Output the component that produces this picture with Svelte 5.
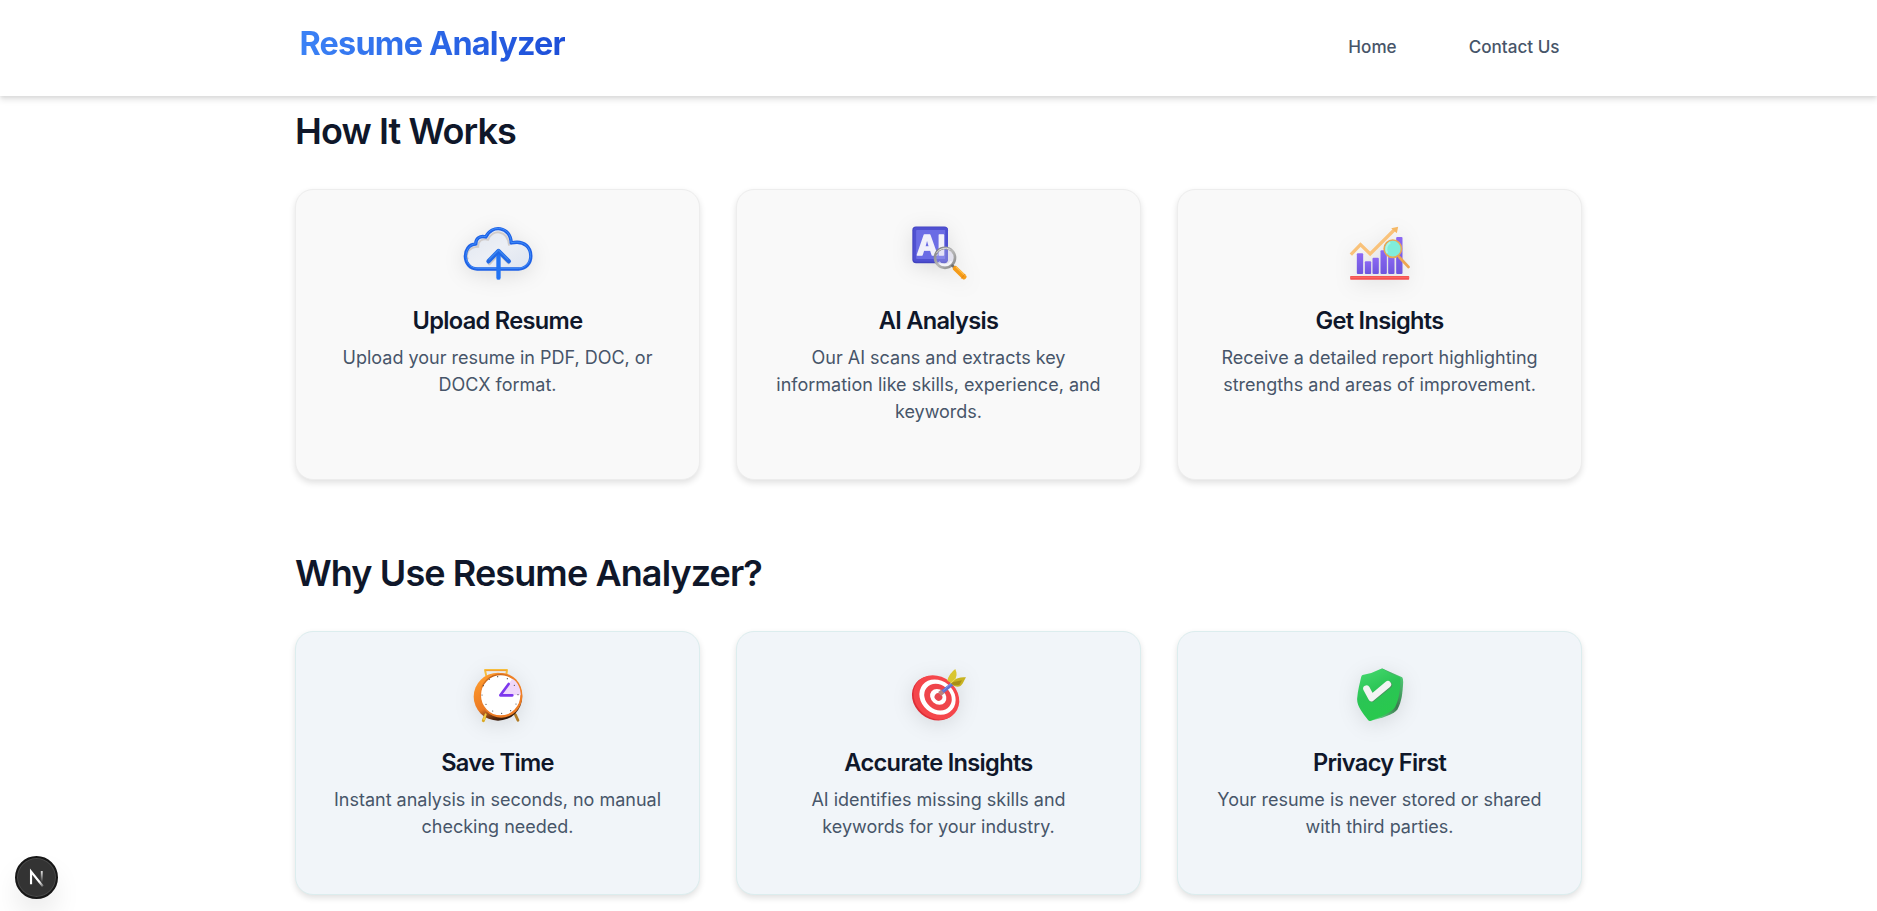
<script lang="ts">
    interface Feature {
        icon: string;
        viewBox: string;
        title: string;
        description: string;
    }

    interface Section {
        heading: string;
        tone: "plain" | "tinted";
        items: Feature[];
    }

    const sections: Section[] = [
        {
            heading: "How It Works",
            tone: "plain",
            items: [
                {
                    icon: "upload",
                    viewBox: "65.5 63 216 162",
                    title: "Upload Resume",
                    description: "Upload your resume in PDF, DOC, or DOCX format.",
                },
                {
                    icon: "ai",
                    viewBox: "38 62.5 216 162",
                    title: "AI Analysis",
                    description:
                        "Our AI scans and extracts key information like skills, experience, and keywords.",
                },
                {
                    icon: "chart",
                    viewBox: "41.5 63 216 162",
                    title: "Get Insights",
                    description:
                        "Receive a detailed report highlighting strengths and areas of improvement.",
                },
            ],
        },
        {
            heading: "Why Use Resume Analyzer?",
            tone: "tinted",
            items: [
                {
                    icon: "clock",
                    viewBox: "36 54 216 162",
                    title: "Save Time",
                    description:
                        "Instant analysis in seconds, no manual checking needed.",
                },
                {
                    icon: "target",
                    viewBox: "38 54 216 162",
                    title: "Accurate Insights",
                    description:
                        "AI identifies missing skills and keywords for your industry.",
                },
                {
                    icon: "shield",
                    viewBox: "41.5 54 216 162",
                    title: "Privacy First",
                    description:
                        "Your resume is never stored or shared with third parties.",
                },
            ],
        },
    ];

    // hour dots on the slightly turned clock face
    const dots = [
        [143, 80],
        [172, 86],
        [193, 106],
        [204, 134],
        [198, 162],
        [182, 182],
        [155, 190],
        [128, 183],
        [108, 163],
        [96, 135],
        [100, 107],
        [118, 88],
    ];

    const bars = [
        { x: 80, y: 145 },
        { x: 104, y: 169 },
        { x: 127, y: 158 },
        { x: 151, y: 136 },
        { x: 174, y: 150 },
        { x: 198, y: 96 },
    ];
</script>

<header class="navbar">
    <div class="navbar-inner">
        <a class="logo" href="#top">Resume Analyzer</a>
        <nav>
            <a href="#home">Home</a>
            <a href="#contact">Contact Us</a>
        </nav>
    </div>
</header>

<main>
    {#each sections as section}
        <section>
            <h2>{section.heading}</h2>
            <div class="grid">
                {#each section.items as item}
                    <article class="card {section.tone}">
                        <svg class="icon" viewBox={item.viewBox} fill="none">
                            {#if item.icon === "upload"}
                                <defs>
                                    <linearGradient id="cloudFill" x1="0" y1="0" x2="1" y2="1">
                                        <stop offset="0" stop-color="#dfe5ef" />
                                        <stop offset="0.5" stop-color="#eceff5" />
                                        <stop offset="1" stop-color="#dde4f0" />
                                    </linearGradient>
                                    <clipPath id="cloudClip">
                                        <path d="M111 192C66 192 63 119 107 117C106 101 119 91 137 96C153 58 212 63 213 114C255 104 272 130 272 153C272 176 256 192 235 192Z" />
                                    </clipPath>
                                </defs>
                                <path
                                    d="M111 192C66 192 63 119 107 117C106 101 119 91 137 96C153 58 212 63 213 114C255 104 272 130 272 153C272 176 256 192 235 192Z"
                                    fill="url(#cloudFill)"
                                />
                                <g clip-path="url(#cloudClip)">
                                    <path
                                        d="M83 163C75 144 87 126 114 125C113 108 126 100 144 104C156 72 202 72 207 122"
                                        stroke="#d0cccb"
                                        stroke-width="6"
                                    />
                                    <path d="M147 177L177 146L205 174" stroke="#cbcaca" stroke-width="8" stroke-linecap="round" />
                                </g>
                                <g stroke-linejoin="round" stroke-linecap="round">
                                    <path
                                        d="M111 192C66 192 63 119 107 117C106 101 119 91 137 96C153 58 212 63 213 114C255 104 272 130 272 153C272 176 256 192 235 192Z"
                                        stroke="#1f62e6"
                                        stroke-width="10"
                                    />
                                    <path
                                        d="M110 190C68 189 66 121 107 116C106 101 119 91 137 95C153 57 212 62 213 113C255 104 271 130 271 152C270 175 255 190 235 190Z"
                                        stroke="#3f8cfa"
                                        stroke-width="3"
                                    />
                                    <path d="M175 140V218" stroke="#2273f3" stroke-width="13" />
                                    <path d="M145 169L175 138L206 169" stroke="#2269e6" stroke-width="13" />
                                    <path d="M147 163L175 135L203 163" stroke="#3c86ef" stroke-width="4" />
                                </g>
                            {:else if item.icon === "ai"}
                                <defs>
                                    <linearGradient id="lens" x1="0" y1="0" x2="1" y2="1">
                                        <stop offset="0" stop-color="#777" />
                                        <stop offset="0.5" stop-color="#b9b9b9" />
                                        <stop offset="1" stop-color="#858585" />
                                    </linearGradient>
                                </defs>
                                <rect x="66" y="64" width="107" height="110" rx="11" fill="#4243bf" />
                                <rect x="69" y="66" width="104" height="104" rx="9" fill="#4f50d2" />
                                <rect x="76" y="73" width="90" height="90" rx="4" fill="#6b6ce5" stroke="#4a4bc8" stroke-width="2" />
                                <text
                                    class="ai-text"
                                    x="79"
                                    y="149"
                                    textLength="86"
                                    lengthAdjust="spacingAndGlyphs">AI</text
                                >
                                <circle cx="164" cy="159" r="27" fill="#c9c8ef" fill-opacity="0.3" />
                                <path d="M145 170A22 22 0 0 0 183 168" stroke="#fff" stroke-opacity="0.6" stroke-width="7" />
                                <circle cx="164" cy="158" r="30" stroke="url(#lens)" stroke-width="8" />
                                <path d="M138 144A31 31 0 0 1 180 133" stroke="#dedede" stroke-width="3" />
                                <path d="M184 179L194 189" stroke="#6f6f6f" stroke-width="8" />
                                <path d="M195 190L221 215" stroke="#f49b19" stroke-width="15" stroke-linecap="round" />
                                <path d="M198 186L224 211" stroke="#ffbd48" stroke-width="4" stroke-linecap="round" />
                                <path d="M213 220L224 207" stroke="#e48110" stroke-width="3" />
                            {:else if item.icon === "chart"}
                                <defs>
                                    <linearGradient id="bar" x1="0" y1="0" x2="0" y2="1">
                                        <stop offset="0" stop-color="#8c68f3" />
                                        <stop offset="1" stop-color="#6e56dd" />
                                    </linearGradient>
                                </defs>
                                {#each bars as bar}
                                    <rect x={bar.x} y={bar.y} width="19" height={207 - bar.y} rx="3" fill="url(#bar)" />
                                {/each}
                                <rect x="60" y="213" width="177" height="11" rx="2" fill="#f45151" />
                                <path d="M60 217H237" stroke="#fa6a63" stroke-width="3" />
                                <path d="M62 149L91 119L120 147L192 75" stroke="#f9c27a" stroke-width="10" />
                                <path d="M183 70L204 65L200 85Z" fill="#f5b866" />
                                <path d="M207 156L235 186" stroke="#eda552" stroke-width="8" stroke-linecap="round" />
                                <circle cx="188" cy="131" r="26" fill="#80edda" stroke="#e8a855" stroke-width="5" />
                                <path d="M171 144A24 24 0 0 1 180 112" stroke="#a9f5e6" stroke-width="6" />
                            {:else if item.icon === "clock"}
                                <defs>
                                    <linearGradient id="clockBody" x1="0.2" y1="0" x2="0.6" y2="1">
                                        <stop offset="0" stop-color="#ff9d2e" />
                                        <stop offset="0.65" stop-color="#ec7a23" />
                                        <stop offset="0.9" stop-color="#54270e" />
                                        <stop offset="1" stop-color="#28160c" />
                                    </linearGradient>
                                    <linearGradient id="clockRim" x1="0" y1="0" x2="0.4" y2="1">
                                        <stop offset="0" stop-color="#9a4a10" />
                                        <stop offset="0.3" stop-color="#ef8126" />
                                        <stop offset="1" stop-color="#ee7a23" />
                                    </linearGradient>
                                </defs>
                                <path d="M109 79L105 60H171L168 81" stroke="#f6bd3d" stroke-width="6" stroke-linejoin="round" />
                                <path d="M106 62H170" stroke="#f38b25" stroke-width="2" />
                                <path d="M108 192L100 212" stroke="#d9a823" stroke-width="9" stroke-linecap="round" />
                                <path d="M196 194L204 211" stroke="#b17a22" stroke-width="8" stroke-linecap="round" />
                                <ellipse cx="144" cy="140" rx="73" ry="72" fill="url(#clockBody)" />
                                <ellipse cx="154" cy="136" rx="63" ry="67" fill="#ee8127" />
                                <ellipse cx="152" cy="136" rx="61" ry="62" fill="#fff" stroke="url(#clockRim)" stroke-width="4" />
                                <path d="M151 136L187 86C203 95 212 114 212 135Z" fill="#efd7fb" />
                                {#each dots as [x, y]}
                                    <circle cx={x} cy={y} r="1.8" fill="#444" />
                                {/each}
                                <path d="M187 136H151L176 102" stroke="#7d37ed" stroke-width="8" stroke-linecap="round" stroke-linejoin="round" />
                                <path d="M107 193L102 208" stroke="#f3cc42" stroke-width="6" stroke-linecap="round" />
                            {:else if item.icon === "target"}
                                <g transform="rotate(40 138 141)">
                                    <ellipse cx="137" cy="147" rx="73" ry="62" fill="#dd2f38" />
                                    <ellipse cx="139" cy="142" rx="73" ry="62" fill="#f5464b" />
                                    <ellipse cx="141" cy="139" rx="58" ry="49" fill="#fff" />
                                    <ellipse cx="142" cy="138" rx="44" ry="37" fill="#ef454b" />
                                    <ellipse cx="142" cy="137" rx="26" ry="22" fill="#fff" />
                                    <ellipse cx="143" cy="137" rx="12" ry="11" fill="#e74850" />
                                </g>
                                <path d="M148 132L158 124" stroke="#b9827d" stroke-width="15" />
                                <path d="M157 125L187 101" stroke="#6174cf" stroke-width="11" />
                                <path d="M159 121L185 98" stroke="#8393e6" stroke-width="3" />
                                <path d="M171 92C173 78 185 65 195 57C201 70 200 82 191 94L184 100Z" fill="#d9c631" />
                                <path d="M188 93C198 83 214 80 227 82C221 92 218 104 209 109C199 112 190 108 184 101Z" fill="#c8b321" />
                                <path d="M180 98L215 91L207 105L190 106Z" fill="#a88f16" />
                                <path d="M181 100L197 85" stroke="#eddc54" stroke-width="3" />
                            {:else}
                                <defs>
                                    <linearGradient id="shieldFace" x1="0.2" y1="0" x2="0.6" y2="1">
                                        <stop offset="0" stop-color="#43d86d" />
                                        <stop offset="0.45" stop-color="#2bc455" />
                                        <stop offset="1" stop-color="#28ca4c" />
                                    </linearGradient>
                                    <linearGradient id="shieldSide" x1="1" y1="0" x2="0" y2="1">
                                        <stop offset="0" stop-color="#54df7d" />
                                        <stop offset="0.45" stop-color="#3d7750" />
                                        <stop offset="0.8" stop-color="#59c97a" />
                                        <stop offset="1" stop-color="#6cf094" />
                                    </linearGradient>
                                </defs>
                                <path
                                    d="M155 55L180 66L216 82Q219 86 219 96C217 131 215 153 202 178C193 193 158 204 119 213L112 207Z"
                                    fill="url(#shieldSide)"
                                />
                                <path
                                    d="M97 75Q125 71 151 57Q156 55 160 58Q184 74 207 80Q211 82 211 87C210 124 206 149 195 171C185 188 151 201 122 212Q116 215 112 208C98 189 79 167 81 145C83 120 89 99 93 81Q94 76 97 75Z"
                                    fill="url(#shieldFace)"
                                />
                                <path d="M111 119L126 146L176 105" stroke="#4b8f5d" stroke-width="19" stroke-linecap="round" stroke-linejoin="round" />
                                <path d="M109 116L124 144L173 103" stroke="#f3f4f3" stroke-width="20" stroke-linecap="round" stroke-linejoin="round" />
                            {/if}
                        </svg>
                        <h3>{item.title}</h3>
                        <p>{item.description}</p>
                    </article>
                {/each}
            </div>
        </section>
    {/each}
</main>

<button class="dev-badge" aria-label="Open dev tools">
    <svg viewBox="0 0 40 40" fill="none">
        <defs>
            <linearGradient id="diag" x1="12" y1="13" x2="28" y2="31" gradientUnits="userSpaceOnUse">
                <stop offset="0.65" stop-color="#fff" />
                <stop offset="1" stop-color="#fff" stop-opacity="0" />
            </linearGradient>
            <linearGradient id="stem" x1="0" y1="12" x2="0" y2="25" gradientUnits="userSpaceOnUse">
                <stop stop-color="#fff" />
                <stop offset="1" stop-color="#fff" stop-opacity="0" />
            </linearGradient>
        </defs>
        <path d="M14.4 26.8V14L26.5 29" stroke="url(#diag)" stroke-width="2.2" />
        <path d="M25.4 13.4V25" stroke="url(#stem)" stroke-width="2" />
    </svg>
</button>

<style>
    :global(body) {
        margin: 0;
        background: #fff;
        font-family: Inter, "Liberation Sans", sans-serif;
        font-size: 18px;
        line-height: 27px;
        color: #0f172a;
    }

    a {
        color: inherit;
        text-decoration: none;
    }

    .navbar {
        height: 96px;
        background: #fff;
        box-shadow:
            0 4px 6px rgb(0 0 0 / 0.1),
            0 1px 4px rgb(0 0 0 / 0.08);
    }

    .navbar-inner {
        box-sizing: border-box;
        width: 1286px;
        height: 94px;
        margin: 0 auto;
        padding: 0 22px 0 4px;
        display: flex;
        align-items: center;
        justify-content: space-between;
    }

    .logo {
        margin-bottom: 7px;
        font-size: 32.4px;
        font-weight: 700;
        line-height: 44px;
        letter-spacing: -0.78px;
        background: linear-gradient(90deg, #3b82f6, #1d4ed8);
        background-clip: text;
        color: transparent;
    }

    nav {
        display: flex;
        gap: 72px;
        margin-bottom: 2px;
        color: #475569;
        font-size: 17.1px;
        font-weight: 500;
    }

    main {
        width: 1287px;
        margin: 0 auto;
        padding: 8px 0 16px;
    }

    section + section {
        margin-top: 66px;
    }

    h2 {
        margin: 0 0 31px;
        font-size: 36px;
        font-weight: 600;
        line-height: 54px;
        letter-spacing: -0.9px;
    }

    .grid {
        display: grid;
        grid-template-columns: repeat(3, 1fr);
        gap: 36px;
    }

    .card {
        padding: 36px 36px 54px;
        border: 1px solid #ededed;
        border-radius: 18px;
        background: #f9f9f9;
        box-shadow: 0 3px 6px rgb(0 0 0 / 0.12);
        text-align: center;
    }

    .card.tinted {
        border-color: #dcedee;
        background: #f1f5f9;
    }

    .icon {
        display: block;
        width: 72px;
        height: 54px;
        margin: 0 auto 24px;
        overflow: visible;
        filter: drop-shadow(0 4px 10px rgb(0 0 0 / 0.11));
    }

    .ai-text {
        font-family: Inter, sans-serif;
        font-size: 82px;
        font-weight: 700;
        fill: #f1f0fa;
        stroke: #f1f0fa;
        stroke-width: 4;
        stroke-linejoin: round;
    }

    h3 {
        margin: 0 0 7px;
        font-size: 23.6px;
        font-weight: 600;
        line-height: 33px;
        letter-spacing: -0.68px;
    }

    .card p {
        margin: 0;
        color: #475569;
    }

    .dev-badge {
        position: fixed;
        left: 15px;
        bottom: 12px;
        width: 43px;
        height: 43px;
        padding: 0;
        border: 2px solid #171717;
        border-radius: 50%;
        background: #333;
        box-shadow:
            inset 0 0 0 1px #484848,
            0 16px 32px -8px rgb(0 0 0 / 0.2);
    }

    .dev-badge svg {
        display: block;
        width: 39px;
        height: 39px;
    }
</style>
